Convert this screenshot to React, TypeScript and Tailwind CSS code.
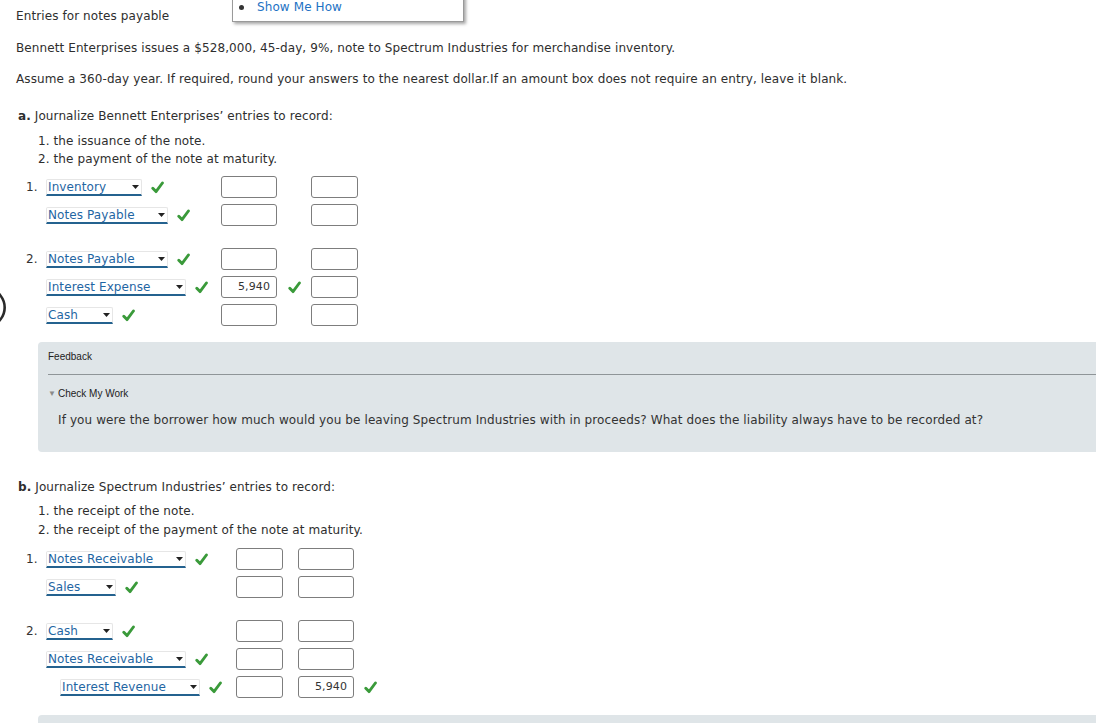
import React from 'react';

type Line = {
  num?: string;
  account: string;
  width: number;
  indent?: boolean;
  debit?: string;
  credit?: string;
  debitOk?: boolean;
  creditOk?: boolean;
};

const Check = () => (
  <svg width="13" height="13" viewBox="0 0 13 13" className="shrink-0">
    <path d="M1.8 7.2 L5 10.6 L11.4 2" fill="none" stroke="#3a9a3a" strokeWidth="2.9" strokeLinecap="round" strokeLinejoin="round" />
  </svg>
);

const Arrow = () => (
  <svg width="7" height="4" viewBox="0 0 7 4" className="shrink-0">
    <path d="M0 0 L7 0 L3.5 4 Z" fill="#222" />
  </svg>
);

const AccountSelect = ({ label, width }: { label: string; width: number }) => (
  <div
    className="flex items-center justify-between h-[17px] pl-[1px] pr-[2px] border border-[#e6e6e6] border-b-2 border-b-[#24628f] rounded-t-[2px] bg-white text-[#1f66a3] leading-[14px]"
    style={{ width }}
  >
    <span>{label}</span>
    <Arrow />
  </div>
);

const AmountBox = ({ value, w }: { value?: string; w: string }) => (
  <div className={`${w} h-[22px] border border-[#7d7d7d] rounded-[3px] bg-white flex items-center justify-end pr-[6px] text-[11px] text-[#333]`}>
    {value}
  </div>
);

const linesA: Line[][] = [
  [
    { num: '1.', account: 'Inventory', width: 96 },
    { account: 'Notes Payable', width: 122 },
  ],
  [
    { num: '2.', account: 'Notes Payable', width: 122 },
    { account: 'Interest Expense', width: 140, debit: '5,940', debitOk: true },
    { account: 'Cash', width: 67 },
  ],
];

const linesB: Line[][] = [
  [
    { num: '1.', account: 'Notes Receivable', width: 140 },
    { account: 'Sales', width: 70 },
  ],
  [
    { num: '2.', account: 'Cash', width: 67 },
    { account: 'Notes Receivable', width: 140 },
    { account: 'Interest Revenue', width: 140, indent: true, credit: '5,940', creditOk: true },
  ],
];

const AccountCell = ({ line, cellWidth }: { line: Line; cellWidth: string }) => (
  <div className={`${cellWidth} flex items-center shrink-0`}>
    <span className="w-[20px] text-[#333]">{line.num}</span>
    <div className={`flex items-center gap-[9px] ${line.indent ? 'ml-[14px]' : ''}`}>
      <AccountSelect label={line.account} width={line.width} />
      <Check />
    </div>
  </div>
);

const JournalA = () => (
  <div className="ml-[10px]">
    {linesA.map((group, gi) => (
      <div key={gi} className={gi > 0 ? 'mt-[16px]' : ''}>
        {group.map((line, i) => (
          <div key={i} className="flex items-center h-[28px]">
            <AccountCell line={line} cellWidth="w-[195px]" />
            <AmountBox value={line.debit} w="w-[56px]" />
            <div className="w-[34px] flex justify-center">{line.debitOk && <Check />}</div>
            <AmountBox value={line.credit} w="w-[47px]" />
          </div>
        ))}
      </div>
    ))}
  </div>
);

const JournalB = () => (
  <div className="ml-[10px]">
    {linesB.map((group, gi) => (
      <div key={gi} className={gi > 0 ? 'mt-[16px]' : ''}>
        {group.map((line, i) => (
          <div key={i} className="flex items-center h-[28px]">
            <AccountCell line={line} cellWidth="w-[210px]" />
            <AmountBox value={line.debit} w="w-[47px]" />
            <div className="w-[15px]" />
            <AmountBox value={line.credit} w="w-[56px]" />
            <div className="ml-[10px]">{line.creditOk && <Check />}</div>
          </div>
        ))}
      </div>
    ))}
  </div>
);

export default function App() {
  return (
    <div className="relative w-full h-[723px] overflow-hidden bg-white text-[12px] tracking-[0.1px] text-[#2e2e2e] font-['DejaVu_Sans',Verdana,sans-serif]">
      {/* Show Me How popup sticking in from the top */}
      <div className="absolute left-[232px] top-[-12px] w-[232px] h-[34px] bg-white border border-[#9a9a9a] shadow-[2px_2px_3px_rgba(0,0,0,0.35)] flex items-end pb-[7px] pl-[6px] z-10">
        <span className="w-[5px] h-[5px] rounded-full bg-[#333] mb-[4px]" />
        <span className="ml-[13px] text-[#1d72c4] leading-[14px]">Show Me How</span>
      </div>

      {/* partial circle on the left edge */}
      <svg className="absolute left-0 top-[287px]" width="12" height="42" viewBox="0 0 12 42">
        <path d="M-10 2 A19 19 0 0 1 -10 39" fill="none" stroke="#2a2a2a" strokeWidth="2.6" />
      </svg>

      <div className="pl-[16px] pt-[7px]">
        <p className="leading-[18px]">Entries for notes payable</p>
        <p className="leading-[18px] mt-[14px]">
          Bennett Enterprises issues a $528,000, 45-day, 9%, note to Spectrum Industries for merchandise inventory.
        </p>
        <p className="leading-[18px] mt-[13px]">
          Assume a 360-day year. If required, round your answers to the nearest dollar.If an amount box does not require an entry, leave it blank.
        </p>

        <p className="leading-[18px] mt-[19px] ml-[2px]">
          <span className="font-bold">a.</span> Journalize Bennett Enterprises’ entries to record:
        </p>
        <div className="ml-[22px] mt-[7px] leading-[18px]">
          <p>1. the issuance of the note.</p>
          <p>2. the payment of the note at maturity.</p>
        </div>

        <div className="mt-[5px]">
          <JournalA />
        </div>

        <div className="mt-[13px] ml-[22px] h-[110px] bg-[#dfe5e8] rounded-l-[4px] pl-[10px] pt-[9px]">
          <p className="font-['Liberation_Sans',Arial,sans-serif] text-[10px] leading-[12px] tracking-normal text-[#222]">Feedback</p>
          <div className="mt-[11px] h-px bg-[#8f9598]" />
          <p className="mt-[13px] font-['Liberation_Sans',Arial,sans-serif] text-[10px] leading-[12px] tracking-normal text-[#222] flex items-center">
            <span className="text-[#8a8a8a] text-[8px] mr-[2px]">▼</span>Check My Work
          </p>
          <p className="mt-[12px] ml-[10px] leading-[16px] text-[#333]">
            If you were the borrower how much would you be leaving Spectrum Industries with in proceeds? What does the liability always have to be recorded at?
          </p>
        </div>

        <p className="leading-[18px] mt-[26px] ml-[2px]">
          <span className="font-bold">b.</span> Journalize Spectrum Industries’ entries to record:
        </p>
        <div className="ml-[22px] mt-[6px] leading-[19px]">
          <p>1. the receipt of the note.</p>
          <p>2. the receipt of the payment of the note at maturity.</p>
        </div>

        <div className="mt-[5px]">
          <JournalB />
        </div>

        <div className="mt-[14px] ml-[22px] h-[20px] bg-[#dfe5e8] rounded-tl-[4px]" />
      </div>
    </div>
  );
}
